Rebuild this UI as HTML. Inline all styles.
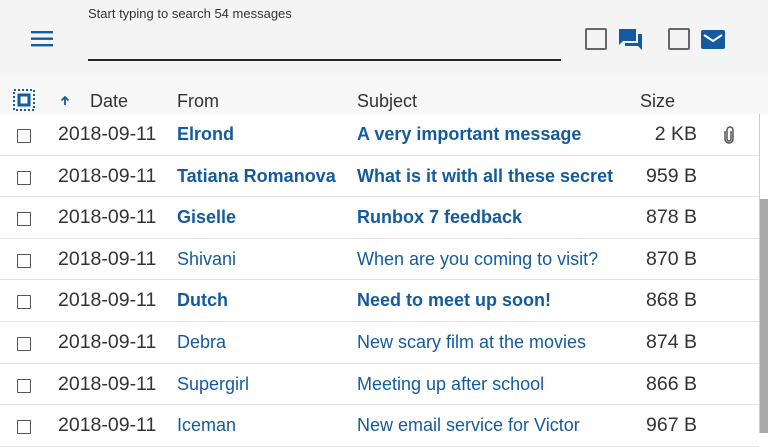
<!DOCTYPE html>
<html><head><meta charset="utf-8"><style>
*{margin:0;padding:0;box-sizing:border-box}
body{width:768px;height:433px;overflow:hidden;background:#fff;font-family:"Liberation Sans",sans-serif;position:relative}
.tb{position:absolute;left:0;top:0;width:768px;height:76px;background:#f4f4f4}
.hd{position:absolute;left:0;top:76px;width:768px;height:38px;background:#f7f7f7}
.t{position:absolute;white-space:nowrap;font-size:18px;color:#333}
.b{color:#135b9e}
.bold{font-weight:bold}
.row{position:absolute;left:0;width:759px;height:41.6px;border-bottom:1px solid #e4e4e4}
.row .t{top:10px}
.d{font-size:19.5px!important;top:9px!important}
.s{font-size:19.5px!important;top:9px!important;right:62px;text-align:right}
.cb{position:absolute;left:17px;top:15px;width:14px;height:14px;border:1.5px solid #555;border-radius:1px}
.subj{width:256px;overflow:hidden}
.from{width:165px;overflow:hidden}
</style></head><body>
<div class="tb"></div>
<div class="hd"></div>
<svg style="position:absolute;left:31px;top:31px" width="22" height="16"><rect y="0" width="22" height="2.4" fill="#135b9e"/><rect y="6.5" width="22" height="2.4" fill="#135b9e"/><rect y="13" width="22" height="2.4" fill="#135b9e"/></svg>
<div class="t" style="left:88px;top:6px;font-size:13px;color:#333">Start typing to search 54 messages</div>
<div style="position:absolute;left:88px;top:59px;width:473px;height:1.5px;background:#222"></div>
<div style="position:absolute;left:585px;top:28px;width:22px;height:22px;border:2px solid #666;border-radius:2px"></div>
<svg style="position:absolute;left:618px;top:28px" width="26" height="24" viewBox="0 0 26 24"><path d="M1 1h17v12H5l-4 4z" fill="#135b9e"/><path d="M20 6h4v16l-4-4H7v-3h13z" fill="#135b9e"/></svg>
<div style="position:absolute;left:668px;top:28px;width:22px;height:22px;border:2px solid #666;border-radius:2px"></div>
<svg style="position:absolute;left:701px;top:30px" width="24" height="19" viewBox="0 0 24 19"><rect width="24" height="19" rx="2" fill="#135b9e"/><path d="M3 5l9 6 9-6" stroke="#fff" stroke-width="2" fill="none"/></svg>
<svg style="position:absolute;left:13px;top:89px" width="22" height="22"><rect x="1" y="1" width="20" height="20" fill="none" stroke="#135b9e" stroke-width="2" stroke-dasharray="2 2"/><rect x="6" y="6" width="10" height="10" fill="none" stroke="#135b9e" stroke-width="3"/></svg>
<svg style="position:absolute;left:60px;top:95px" width="10" height="11" viewBox="0 0 10 11"><path d="M5 10V2M1.5 5.5L5 2l3.5 3.5" stroke="#135b9e" stroke-width="1.8" fill="none"/></svg>
<div class="t" style="left:90px;top:91px">Date</div>
<div class="t" style="left:177px;top:91px">From</div>
<div class="t" style="left:357px;top:91px">Subject</div>
<div class="t" style="left:640px;top:91px">Size</div>

<div class="row" style="top:114px"><div class="cb"></div><div class="t d" style="left:58px">2018-09-11</div><div class="t b bold from" style="left:177px">Elrond</div><div class="t b bold subj" style="left:357px">A very important message</div><div class="t s">2 KB</div>
<svg style="position:absolute;left:724px;top:12px" width="10" height="18" viewBox="0 0 10 18"><path d="M7 5v8a2 2 0 0 1-4 0V4a3 3 0 0 1 6 0v9a4 4 0 0 1-8 0V5" stroke="#555" stroke-width="1.5" fill="none"/></svg></div>
<div class="row" style="top:155.6px"><div class="cb"></div><div class="t d" style="left:58px">2018-09-11</div><div class="t b bold from" style="left:177px">Tatiana Romanova</div><div class="t b bold subj" style="left:357px">What is it with all these secret messages</div><div class="t s">959 B</div></div>
<div class="row" style="top:197.2px"><div class="cb"></div><div class="t d" style="left:58px">2018-09-11</div><div class="t b bold from" style="left:177px">Giselle</div><div class="t b bold subj" style="left:357px">Runbox 7 feedback</div><div class="t s">878 B</div></div>
<div class="row" style="top:238.8px"><div class="cb"></div><div class="t d" style="left:58px">2018-09-11</div><div class="t b from" style="left:177px">Shivani</div><div class="t b subj" style="left:357px">When are you coming to visit?</div><div class="t s">870 B</div></div>
<div class="row" style="top:280.4px"><div class="cb"></div><div class="t d" style="left:58px">2018-09-11</div><div class="t b bold from" style="left:177px">Dutch</div><div class="t b bold subj" style="left:357px">Need to meet up soon!</div><div class="t s">868 B</div></div>
<div class="row" style="top:322px"><div class="cb"></div><div class="t d" style="left:58px">2018-09-11</div><div class="t b from" style="left:177px">Debra</div><div class="t b subj" style="left:357px">New scary film at the movies</div><div class="t s">874 B</div></div>
<div class="row" style="top:363.6px"><div class="cb"></div><div class="t d" style="left:58px">2018-09-11</div><div class="t b from" style="left:177px">Supergirl</div><div class="t b subj" style="left:357px">Meeting up after school</div><div class="t s">866 B</div></div>
<div class="row" style="top:405.2px"><div class="cb"></div><div class="t d" style="left:58px">2018-09-11</div><div class="t b from" style="left:177px">Iceman</div><div class="t b subj" style="left:357px">New email service for Victor</div><div class="t s">967 B</div></div>

<div style="position:absolute;left:759px;top:114px;width:9px;height:319px;background:#fff;border-left:1px solid #ccc"></div>
<div style="position:absolute;left:760px;top:199px;width:8px;height:234px;background:#a8a8a8"></div>
</body></html>
